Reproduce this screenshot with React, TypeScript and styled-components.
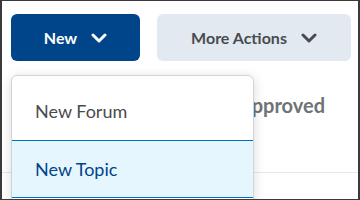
import React from 'react';
import styled, { createGlobalStyle } from 'styled-components';

const GlobalStyle = createGlobalStyle`
  html, body {
    margin: 0;
    padding: 0;
    background: #ffffff;
  }
  body {
    font-family: Lato, "Noto Sans", sans-serif;
  }
`;

const Frame = styled.div`
  position: relative;
  box-sizing: border-box;
  width: 360px;
  height: 200px;
  overflow: hidden;
  background: #ffffff;
  border-style: solid;
  border-color: #3a3a3a;
  border-width: 1px 2px 1px 2px;
`;

const Toolbar = styled.div`
  display: flex;
  gap: 17px;
  padding: 13px 0 0 9px;
`;

const Button = styled.button<{ $primary?: boolean; $width: number }>`
  display: flex;
  align-items: center;
  justify-content: center;
  gap: 14px;
  box-sizing: border-box;
  width: ${(p) => p.$width}px;
  height: 47px;
  padding: 0;
  border: none;
  border-radius: 6px;
  font-family: Lato, "Noto Sans", sans-serif;
  font-size: 16px;
  font-weight: 700;
  background: ${(p) => (p.$primary ? '#004489' : '#e3e9f1')};
  color: ${(p) => (p.$primary ? '#ffffff' : '#494c4e')};
`;

const Header = styled.div`
  display: flex;
  justify-content: flex-end;
  height: 57px;
  padding: 32px 33px 22px 0;
  border-bottom: 1px solid #e3e9f1;
  font-size: 20px;
  line-height: 25px;
  font-weight: 700;
  color: #6e7376;
`;

const Menu = styled.div`
  position: absolute;
  top: 74px;
  left: 9px;
  width: 243px;
  box-sizing: border-box;
  padding: 6px 0 12px;
  background: #ffffff;
  border: 1px solid #cdd5dc;
  border-radius: 6px;
  box-shadow: 0 2px 12px rgba(0, 0, 0, 0.15);
`;

const MenuItem = styled.div<{ $selected?: boolean }>`
  padding: 17px 0 17px 23px;
  font-size: 18px;
  line-height: 22px;
  color: ${(p) => (p.$selected ? '#004489' : '#494c4e')};
  background: ${(p) => (p.$selected ? '#e6f6ff' : 'transparent')};
  border-top: 1px solid ${(p) => (p.$selected ? '#006fbf' : 'transparent')};
  border-bottom: 1px solid ${(p) => (p.$selected ? '#006fbf' : 'transparent')};
`;

function Chevron() {
  return (
    <svg width="16" height="10" viewBox="0 0 16 10" fill="none">
      <polyline
        points="2,2 8,8 14,2"
        stroke="currentColor"
        strokeWidth="3"
        strokeLinecap="round"
        strokeLinejoin="round"
      />
    </svg>
  );
}

export default function App() {
  return (
    <>
      <GlobalStyle />
      <Frame>
        <Toolbar>
          <Button $primary $width={129}>
            New
            <Chevron />
          </Button>
          <Button $width={194}>
            More Actions
            <Chevron />
          </Button>
        </Toolbar>
        <Header>Approved</Header>
        <Menu>
          <MenuItem>New Forum</MenuItem>
          <MenuItem $selected>New Topic</MenuItem>
        </Menu>
      </Frame>
    </>
  );
}
